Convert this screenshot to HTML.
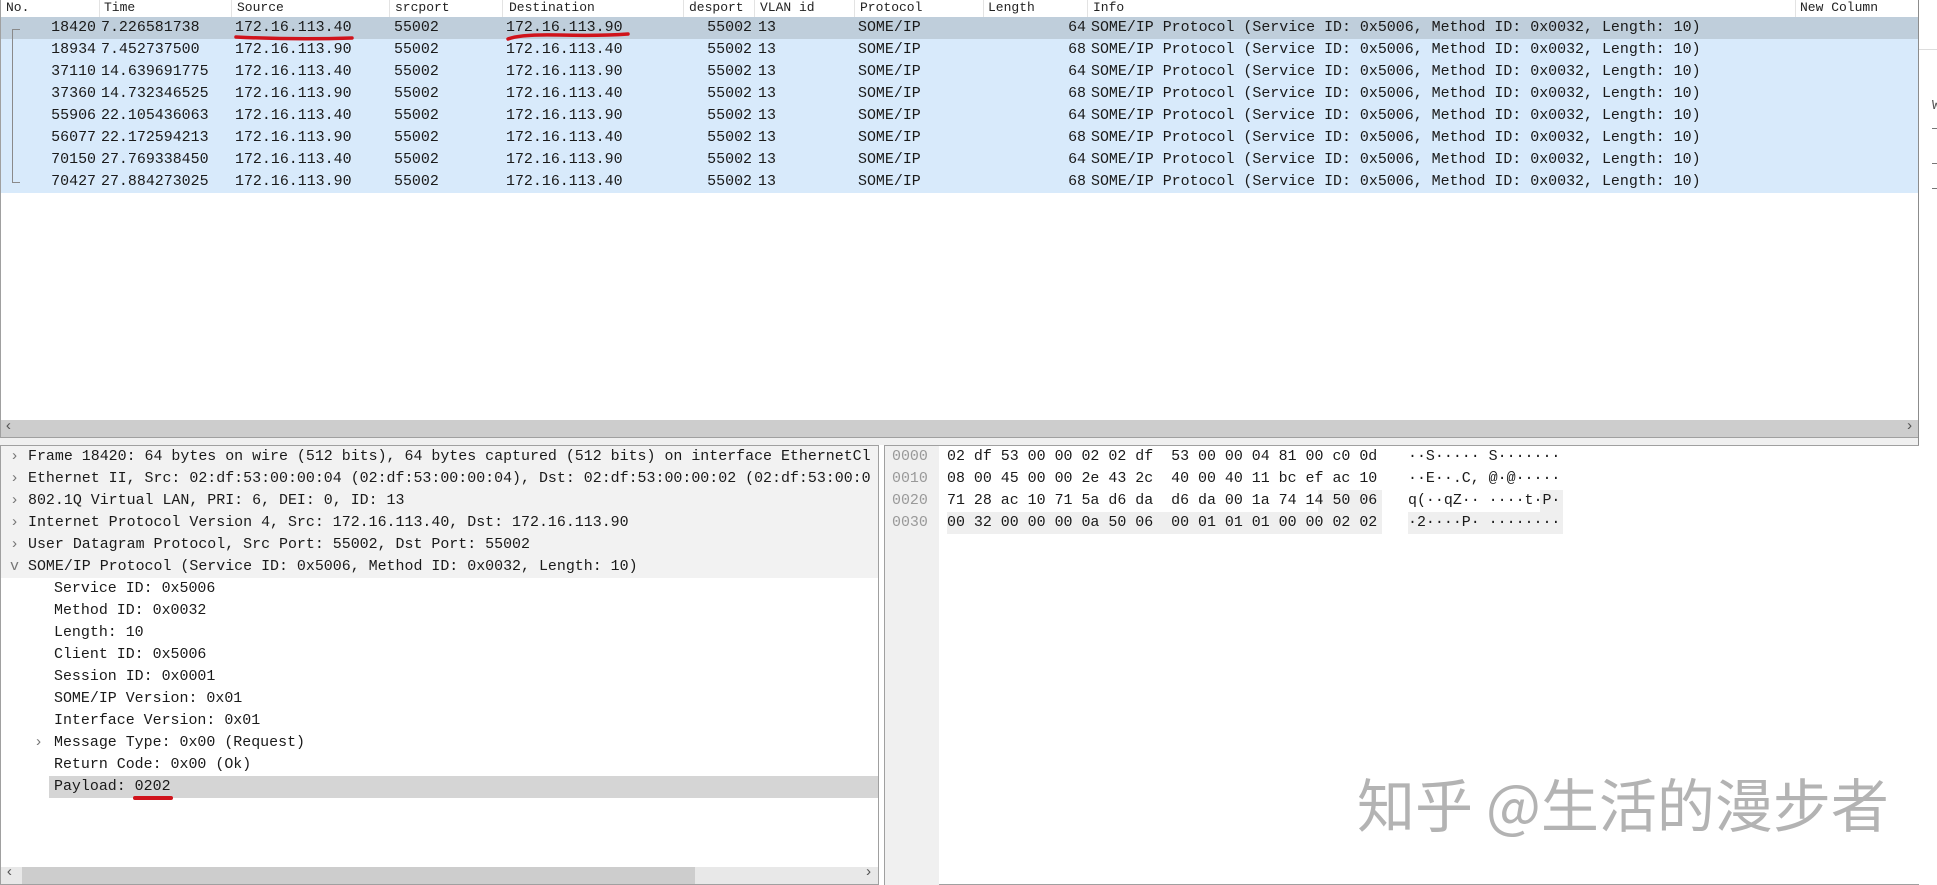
<!DOCTYPE html>
<html><head><meta charset="utf-8"><style>
*{margin:0;padding:0;box-sizing:border-box}
body{width:1937px;height:885px;background:#fff;position:relative;overflow:hidden;font-family:"Liberation Mono","Noto Sans CJK SC",monospace;font-size:14.95px;color:#1a1a1a}
.a{position:absolute;white-space:pre}
.h{position:absolute;top:0;height:17px;font-size:13px;line-height:15px;color:#222;font-family:"Liberation Mono",monospace}
.d{position:absolute;top:0;width:1px;height:17px;background:#e3e3e3}
.row{position:absolute;left:0;width:1919px;height:22px;line-height:22px;background:#d8eafb}
.row span{position:absolute;top:0;white-space:pre}
.r{text-align:right}
.dl{position:absolute;left:1px;width:877px;height:22px;line-height:22px;white-space:pre}
.dl i{position:absolute;left:9px;top:0;font-style:normal;color:#777}
.dl b{position:absolute;left:27px;top:0;font-weight:normal}
.hx{position:absolute;height:22px;line-height:22px;white-space:pre}
</style></head><body>
<div class="h" style="left:6px">No.</div>
<div class="h" style="left:104px">Time</div>
<div class="h" style="left:237px">Source</div>
<div class="h" style="left:395px">srcport</div>
<div class="h" style="left:509px">Destination</div>
<div class="h" style="left:689px">desport</div>
<div class="h" style="left:760px">VLAN id</div>
<div class="h" style="left:860px">Protocol</div>
<div class="h" style="left:988px">Length</div>
<div class="h" style="left:1093px">Info</div>
<div class="h" style="left:1800px">New Column</div>
<div class="d" style="left:99px"></div><div class="d" style="left:231px"></div><div class="d" style="left:389px"></div><div class="d" style="left:502px"></div><div class="d" style="left:683px"></div><div class="d" style="left:754px"></div><div class="d" style="left:854px"></div><div class="d" style="left:983px"></div><div class="d" style="left:1087px"></div><div class="d" style="left:1795px"></div>

<div id="rows"></div>
<script>
var data=[["18420","7.226581738","172.16.113.40","172.16.113.90","64"],["18934","7.452737500","172.16.113.90","172.16.113.40","68"],["37110","14.639691775","172.16.113.40","172.16.113.90","64"],["37360","14.732346525","172.16.113.90","172.16.113.40","68"],["55906","22.105436063","172.16.113.40","172.16.113.90","64"],["56077","22.172594213","172.16.113.90","172.16.113.40","68"],["70150","27.769338450","172.16.113.40","172.16.113.90","64"],["70427","27.884273025","172.16.113.90","172.16.113.40","68"]];
var h="";
data.forEach(function(r,i){
h+='<div class="row" style="top:'+(17+i*22)+'px;'+(i==0?'background:#bfcedb':'')+'">'+
'<span class="r" style="left:40px;width:56px">'+r[0]+'</span>'+
'<span style="left:101px">'+r[1]+'</span>'+
'<span style="left:235px">'+r[2]+'</span>'+
'<span style="left:394px">55002</span>'+
'<span style="left:506px">'+r[3]+'</span>'+
'<span class="r" style="left:680px;width:72px">55002</span>'+
'<span style="left:758px">13</span>'+
'<span style="left:858px">SOME/IP</span>'+
'<span class="r" style="left:1040px;width:46px">'+r[4]+'</span>'+
'<span style="left:1091px">SOME/IP Protocol (Service ID: 0x5006, Method ID: 0x0032, Length: 10)</span></div>';
});
document.getElementById("rows").innerHTML=h;
</script>
<div class="a" style="left:12px;top:29px;width:1px;height:154px;background:#8a8a8a"></div>
<div class="a" style="left:12px;top:29px;width:8px;height:1px;background:#8a8a8a"></div>
<div class="a" style="left:12px;top:182px;width:8px;height:1px;background:#8a8a8a"></div>
<svg class="a" style="left:0;top:0" width="800" height="50"><path d="M236 37 Q295 40 352 38" stroke="#d0131b" stroke-width="3.5" fill="none" stroke-linecap="round"/><path d="M508 39 Q520 34 560 35 Q600 36 628 34" stroke="#d0131b" stroke-width="3.5" fill="none" stroke-linecap="round"/></svg>
<div class="a" style="left:0;top:0;width:1px;height:437px;background:#a0a0a0"></div>
<div class="a" style="left:1918px;top:0;width:1px;height:885px;background:#8c8c8c"></div>
<div class="a" style="left:1px;top:420px;width:1917px;height:17px;background:#cdcdcd"></div>
<div class="a" style="left:4px;top:418px;font-size:15px;color:#555">‹</div>
<div class="a" style="left:1905px;top:418px;font-size:15px;color:#555">›</div>
<div class="a" style="left:0;top:437px;width:1918px;height:8px;background:#f0f0f0;border-top:1px solid #a0a0a0"></div>
<div class="a" style="left:1919px;top:0;width:18px;height:885px;background:#fff"></div>
<div class="a" style="left:1919px;top:49px;width:18px;height:1px;background:#ddd"></div>
<div class="a" style="left:1932px;top:98px;font-size:14px;color:#555">W</div>
<div class="a" style="left:1932px;top:128px;width:5px;height:1px;background:#777"></div>
<div class="a" style="left:1932px;top:163px;width:5px;height:1px;background:#777"></div>
<div class="a" style="left:1932px;top:188px;width:5px;height:1px;background:#777"></div>
<div class="a" style="left:0;top:445px;width:879px;height:440px;border:1px solid #a0a0a0;background:#fff"></div>
<div class="dl" style="top:446px;background:#f2f2f2"><i>›</i><b>Frame 18420: 64 bytes on wire (512 bits), 64 bytes captured (512 bits) on interface EthernetCl</b></div>
<div class="dl" style="top:468px;background:#f2f2f2"><i>›</i><b>Ethernet II, Src: 02:df:53:00:00:04 (02:df:53:00:00:04), Dst: 02:df:53:00:00:02 (02:df:53:00:0</b></div>
<div class="dl" style="top:490px;background:#f2f2f2"><i>›</i><b>802.1Q Virtual LAN, PRI: 6, DEI: 0, ID: 13</b></div>
<div class="dl" style="top:512px;background:#f2f2f2"><i>›</i><b>Internet Protocol Version 4, Src: 172.16.113.40, Dst: 172.16.113.90</b></div>
<div class="dl" style="top:534px;background:#f2f2f2"><i>›</i><b>User Datagram Protocol, Src Port: 55002, Dst Port: 55002</b></div>
<div class="dl" style="top:556px;background:#f2f2f2"><i>v</i><b>SOME/IP Protocol (Service ID: 0x5006, Method ID: 0x0032, Length: 10)</b></div>
<div id="kids"></div>
<script>
var k=["Service ID: 0x5006","Method ID: 0x0032","Length: 10","Client ID: 0x5006","Session ID: 0x0001","SOME/IP Version: 0x01","Interface Version: 0x01","Message Type: 0x00 (Request)","Return Code: 0x00 (Ok)","Payload: 0202"];
var s="";k.forEach(function(t,i){s+='<div class="dl" style="top:'+(578+i*22)+'px;left:49px;width:829px;padding-left:5px;'+(i==9?'background:#d5d5d5':'')+'">'+t+'</div>';});
document.getElementById("kids").innerHTML=s;
</script>
<div class="a" style="left:34px;top:732px;line-height:22px;color:#777">›</div>
<div class="a" style="left:133px;top:796px;width:40px;height:4px;border-radius:2px;background:#d0131b"></div>
<div class="a" style="left:1px;top:867px;width:877px;height:17px;background:#e8e8e8"></div>
<div class="a" style="left:22px;top:867px;width:673px;height:17px;background:#cdcdcd"></div>
<div class="a" style="left:5px;top:865px;color:#555">‹</div>
<div class="a" style="left:864px;top:865px;color:#555">›</div>
<div class="a" style="left:884px;top:445px;width:1035px;height:440px;border:1px solid #a0a0a0;border-right:none;background:#fff"></div>
<div class="a" style="left:885px;top:446px;width:54px;height:439px;background:#f0f0f0"></div>
<div class="a" style="left:1318px;top:490px;width:64px;height:22px;background:#efefef"></div>
<div class="a" style="left:947px;top:512px;width:435px;height:22px;background:#efefef"></div>
<div class="a" style="left:1540px;top:490px;width:23px;height:22px;background:#efefef"></div>
<div class="a" style="left:1408px;top:512px;width:155px;height:22px;background:#efefef"></div>
<div class="hx" style="left:892px;top:446px;color:#999">0000</div>
<div class="hx" style="left:892px;top:468px;color:#999">0010</div>
<div class="hx" style="left:892px;top:490px;color:#999">0020</div>
<div class="hx" style="left:892px;top:512px;color:#999">0030</div>
<div class="hx" style="left:947px;top:446px">02 df 53 00 00 02 02 df  53 00 00 04 81 00 c0 0d</div>
<div class="hx" style="left:947px;top:468px">08 00 45 00 00 2e 43 2c  40 00 40 11 bc ef ac 10</div>
<div class="hx" style="left:947px;top:490px">71 28 ac 10 71 5a d6 da  d6 da 00 1a 74 14 50 06</div>
<div class="hx" style="left:947px;top:512px">00 32 00 00 00 0a 50 06  00 01 01 01 00 00 02 02</div>
<div class="hx" style="left:1408px;top:446px">··S····· S·······</div>
<div class="hx" style="left:1408px;top:468px">··E··.C, @·@·····</div>
<div class="hx" style="left:1408px;top:490px">q(··qZ·· ····t·P·</div>
<div class="hx" style="left:1408px;top:512px">·2····P· ········</div>
<div class="a" style="left:1357px;top:768px;font-family:'Noto Sans CJK SC',sans-serif;font-size:58px;line-height:68px;color:#b3b3b3">知乎 @生活的漫步者</div>
</body></html>
